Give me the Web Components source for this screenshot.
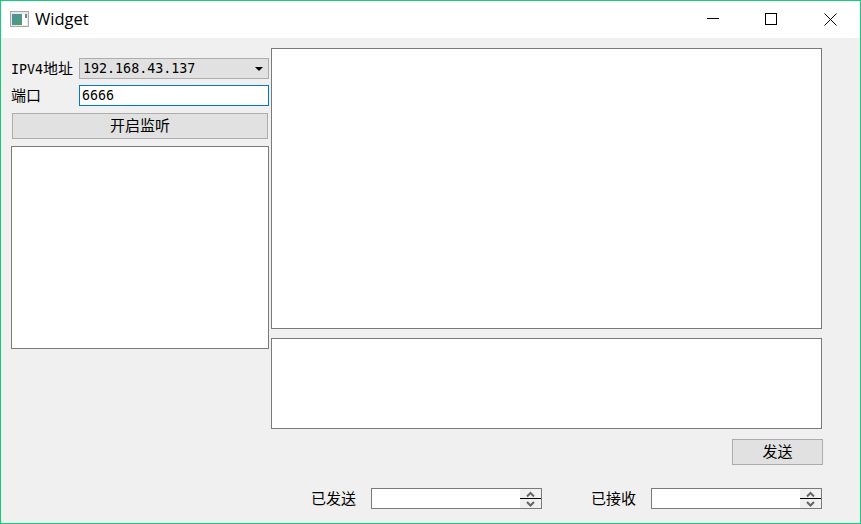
<!DOCTYPE html>
<html lang="zh"><head><meta charset="utf-8"><title>Widget</title>
<style>
html,body{margin:0;padding:0;background:#f0f0f0}
body{font-family:"Noto Sans CJK SC",sans-serif;font-size:15px;font-weight:400;color:#000}
.l{font-family:"DejaVu Sans Mono",monospace;font-size:13.33px;font-weight:400}
</style></head><body>
<x-window>
  <x-titlebar slot="title">Widget</x-titlebar>
  <x-panel slot="left">
    <x-row><x-label style="width:68px;padding-bottom:1px"><span class="l">IPV4</span>地址</x-label><x-combo class="l">192.168.43.137</x-combo></x-row>
    <x-row style="margin-top:6px"><x-label style="width:68px">端口</x-label><x-edit class="l">6666</x-edit></x-row>
    <x-button style="margin:7px 1px 0;height:26px">开启监听</x-button>
    <x-box style="margin-top:7px;height:203px"></x-box>
  </x-panel>
  <x-panel slot="right">
    <x-box style="height:281px"></x-box>
    <x-box style="height:91px;margin-top:9px"></x-box>
    <x-button style="margin:10px -1px 0 auto;width:91px;height:26px">发送</x-button>
    <x-row style="margin-top:23px;justify-content:flex-end">
      <x-label style="width:45px;margin-right:15px">已发送</x-label><x-spin></x-spin>
      <x-label style="width:45px;margin:0 15px 0 49px">已接收</x-label><x-spin></x-spin>
    </x-row>
  </x-panel>
</x-window>
<script>
function def(name, html){
  customElements.define(name, class extends HTMLElement{
    constructor(){super();this.attachShadow({mode:"open"}).innerHTML=html;}
  });
}
def("x-window",`<style>
:host{display:flex;flex-direction:column;box-sizing:border-box;width:861px;height:524px;border:1px solid #10cf78;background:#f0f0f0;overflow:hidden}
.body{display:grid;grid-template-columns:258px 551px;column-gap:2px;padding-left:10px;flex:1}
::slotted([slot=left]){padding-top:20px}
::slotted([slot=right]){padding-top:10px}
</style><slot name="title"></slot><div class="body"><slot name="left"></slot><slot name="right"></slot></div>`);
def("x-titlebar",`<style>
:host{display:flex;align-items:center;height:37px;background:#fff;font:400 16.5px/20px "Open Sans",sans-serif;color:#000;flex:none}
.ic{margin:0 6px 0 9px;display:block}
.t{flex:1;position:relative;top:-0.5px}
.b{display:block;margin-right:17px}
</style>
<svg class="ic" width="19" height="17" viewBox="0 0 19 17"><defs><linearGradient id="g" x1="0" y1="0" x2="1" y2="1"><stop offset="0" stop-color="#4f8fa8"/><stop offset="1" stop-color="#4f9f6a"/></linearGradient></defs>
<rect x=".5" y=".5" width="18" height="15" fill="#e8e8e8" stroke="#a9a9a9"/><rect x="2" y="3" width="10" height="11" fill="url(#g)"/><rect x="12" y="3" width="5" height="11" fill="#fff"/><rect x="15" y="3" width="2" height="4" fill="#6b8a92"/></svg>
<span class="t"><slot></slot></span>
<svg class="b" width="136" height="37" viewBox="0 0 136 37" fill="none" stroke="#000" stroke-width="1">
<path d="M0 17.5H12"/><rect x="58.5" y="12.5" width="11" height="11"/><path d="M117.5 12.5L129.5 24.5M129.5 12.5L117.5 24.5"/></svg>`);
def("x-panel",`<style>:host{display:flex;flex-direction:column;min-width:0}</style><slot></slot>`);
def("x-row",`<style>:host{display:flex;align-items:center;height:21px}</style><slot></slot>`);
def("x-label",`<style>:host{display:block;flex:none;line-height:21px;white-space:nowrap;padding-bottom:3px}</style><slot></slot>`);
def("x-combo",`<style>
:host{display:flex;align-items:center;box-sizing:border-box;width:190px;height:21px;background:#e1e1e1;border:1px solid #adadad;padding-left:3px}
span{flex:1}svg{margin-right:5px}
</style><span><slot></slot></span><svg width="8" height="4" viewBox="0 0 8 4"><path d="M0 0H8L4 4Z" fill="#000"/></svg>`);
def("x-edit",`<style>
:host{display:flex;align-items:center;box-sizing:border-box;width:190px;height:21px;background:#fff;border:1px solid #0078d7;padding-left:2px}
</style><slot></slot>`);
def("x-button",`<style>
:host{display:flex;align-items:center;justify-content:center;box-sizing:border-box;background:#e1e1e1;border:1px solid #adadad;padding-bottom:3px}
</style><slot></slot>`);
def("x-box",`<style>:host{display:block;box-sizing:border-box;background:#fff;border:1px solid #7a7a7a}</style><slot></slot>`);
def("x-spin",`<style>
:host{display:flex;box-sizing:border-box;width:171px;height:21px;background:#fff;border:1px solid #7a7a7a;flex:none}
.f{flex:1}
.s{width:21px;background:#f0f0f0;display:block}
</style><div class="f"></div>
<svg class="s" width="21" height="19" viewBox="0 0 21 19"><path d="M0 9.5H21" stroke="#000" fill="none"/>
<path d="M7 7.5L10.5 4L14 7.5" stroke="#666" stroke-width="2" fill="none"/><path d="M7 13L10.5 16.5L14 13" stroke="#666" stroke-width="2" fill="none"/></svg>`);
</script>
</body></html>
